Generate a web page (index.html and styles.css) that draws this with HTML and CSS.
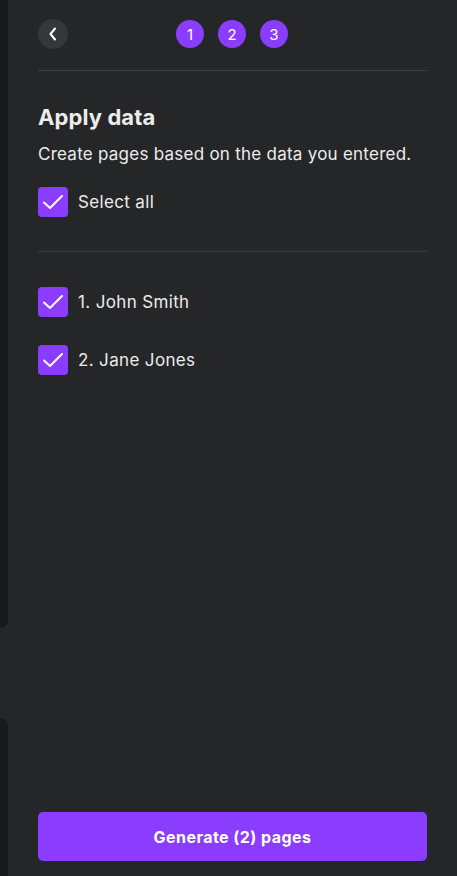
FILE: index.html
```html
<!DOCTYPE html>
<html>
<head>
<meta charset="utf-8">
<link rel="stylesheet" href="styles.css">
</head>
<body>
<div class="app">
  <div class="rail">
    <div class="rail-top"></div>
    <div class="rail-gap"></div>
    <div class="rail-bottom"></div>
  </div>
  <div class="panel">
    <div class="topbar">
      <button class="back" aria-label="Back">
        <svg width="10" height="14" viewBox="0 0 10 14"><path d="M7 1.5 L2.5 7 L7 12.5" fill="none" stroke="#fff" stroke-width="2" stroke-linecap="round" stroke-linejoin="round"/></svg>
      </button>
      <div class="steps">
        <span class="step">1</span>
        <span class="step">2</span>
        <span class="step">3</span>
      </div>
    </div>
    <div class="divider"></div>
    <h1 class="title">Apply data</h1>
    <p class="desc">Create pages based on the data you entered.</p>
    <label class="check-row">
      <span class="box"><svg width="22" height="16" viewBox="0 0 22 16"><path d="M2 8.5 L8 14 L20 2" fill="none" stroke="#fff" stroke-width="2" stroke-linecap="round" stroke-linejoin="round"/></svg></span>
      <span class="label">Select all</span>
    </label>
    <div class="divider second"></div>
    <div class="list">
      <label class="check-row">
        <span class="box"><svg width="22" height="16" viewBox="0 0 22 16"><path d="M2 8.5 L8 14 L20 2" fill="none" stroke="#fff" stroke-width="2" stroke-linecap="round" stroke-linejoin="round"/></svg></span>
        <span class="label">1. John Smith</span>
      </label>
      <label class="check-row">
        <span class="box"><svg width="22" height="16" viewBox="0 0 22 16"><path d="M2 8.5 L8 14 L20 2" fill="none" stroke="#fff" stroke-width="2" stroke-linecap="round" stroke-linejoin="round"/></svg></span>
        <span class="label">2. Jane Jones</span>
      </label>
    </div>
    <div class="spacer"></div>
    <button class="generate">Generate (2) pages</button>
  </div>
</div>
</body>
</html>
```
FILE: styles.css
```css
* { box-sizing: border-box; }
html, body { margin: 0; padding: 0; height: 100%; }
body {
  background: #252628;
  font-family: Inter, "Noto Sans", sans-serif;
  color: #ececec;
}
.app { display: flex; height: 876px; }
.rail { width: 8px; display: flex; flex-direction: column; flex: none; }
.rail-top { height: 628px; background: #18191b; border-bottom-right-radius: 8px; }
.rail-gap { height: 90px; }
.rail-bottom { flex: 1; background: #18191b; border-top-right-radius: 8px; }
.panel {
  flex: 1;
  display: flex;
  flex-direction: column;
  padding: 19px 30px 15px 30px;
}
.topbar { position: relative; height: 30px; display: flex; align-items: center; }
.back {
  width: 30px; height: 30px; border-radius: 50%;
  background: #36373a; border: 0; padding: 0;
  display: flex; align-items: center; justify-content: center;
}
.steps {
  position: absolute; left: 138px; top: 1px;
  display: flex; gap: 14px;
}
.step {
  width: 28px; height: 28px; border-radius: 50%;
  background: #8b3dff; color: #fff;
  font-size: 15px; display: flex; align-items: center; justify-content: center;
}
.divider { height: 1px; background: #3c3d40; margin-top: 21px; }
.title { margin: 33px 0 0; font-size: 22px; font-weight: 700; line-height: 26px; color: #ececec; letter-spacing: 0.1px; }
.desc { margin: 13px 0 0; font-size: 17px; line-height: 22px; letter-spacing: 0.25px; }
.check-row { display: flex; align-items: center; gap: 10px; height: 30px; }
.panel > .check-row { margin-top: 22px; }
.box {
  width: 30px; height: 30px; border-radius: 4px; background: #8b3dff;
  display: flex; align-items: center; justify-content: center; flex: none;
}
.label { font-size: 17px; letter-spacing: 0.35px; }
.divider.second { margin-top: 34px; }
.list { display: flex; flex-direction: column; gap: 28px; margin-top: 35px; }
.spacer { flex: 1; }
.generate {
  height: 49px; width: 100%; border: 0; border-radius: 5px;
  background: #8b3dff; color: #fff;
  font-family: inherit; font-size: 16px; font-weight: 700; letter-spacing: 0.45px;
}
```
